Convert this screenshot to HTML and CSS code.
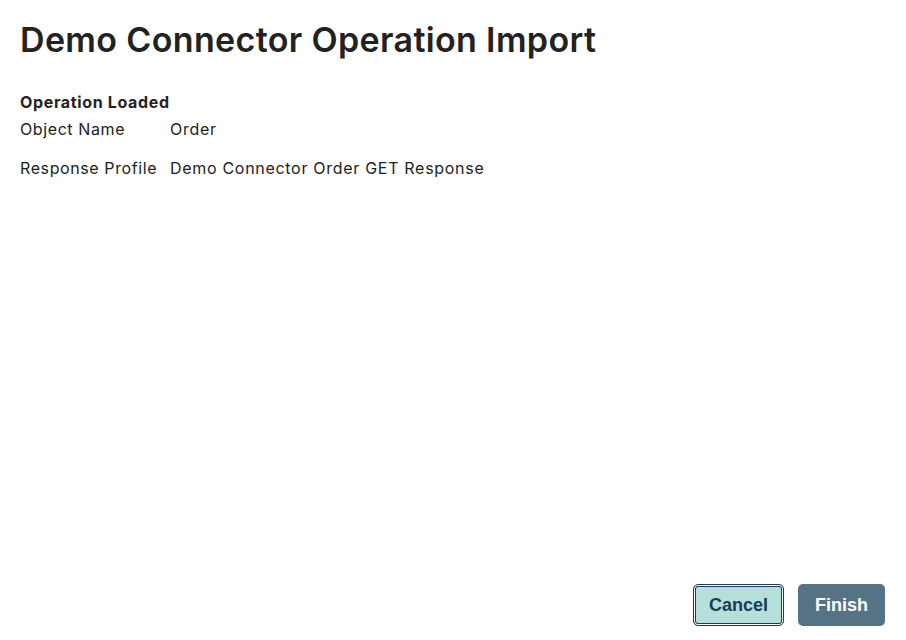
FILE: index.html
```html
<!DOCTYPE html>
<html>
<head>
<meta charset="utf-8">
<link rel="stylesheet" href="styles.css">
</head>
<body>
<div class="page">
  <main class="content">
    <h1 class="title">Demo Connector Operation Import</h1>
    <section class="details">
      <h2 class="section-title">Operation Loaded</h2>
      <div class="row row-first">
        <span class="label">Object Name</span>
        <span class="value">Order</span>
      </div>
      <div class="row">
        <span class="label">Response Profile</span>
        <span class="value">Demo Connector Order GET Response</span>
      </div>
    </section>
  </main>
  <footer class="actions">
    <button class="btn btn-cancel">Cancel</button>
    <button class="btn btn-finish">Finish</button>
  </footer>
</div>
</body>
</html>
```

FILE: styles.css
```css
html, body {
  margin: 0;
  padding: 0;
  background: #ffffff;
}
body {
  font-family: Inter, "Noto Sans", sans-serif;
  color: #222222;
}
.page {
  width: 906px;
  height: 640px;
  display: flex;
  flex-direction: column;
  box-sizing: border-box;
  padding: 20px 21px 14px 20px;
}
.content {
  flex: 1;
}
.title {
  margin: 0;
  font-size: 34px;
  font-weight: 600;
  line-height: 40px;
  letter-spacing: 0.35px;
  color: #222222;
}
.details {
  margin-top: 30px;
  letter-spacing: 0.6px;
}
.section-title {
  margin: 0;
  font-size: 16px;
  font-weight: 700;
  line-height: 24px;
  letter-spacing: 0.65px;
}
.row {
  display: flex;
  font-size: 16px;
  line-height: 24px;
  margin-top: 15px;
}
.row-first {
  margin-top: 3px;
}
.label {
  width: 150px;
}
.value {
  letter-spacing: 0.7px;
}
.actions {
  display: flex;
  justify-content: flex-end;
  gap: 14px;
}
.btn {
  font-family: "Liberation Sans", Arial, sans-serif;
  font-weight: 700;
  font-size: 18px;
  height: 42px;
  border-radius: 5px;
  cursor: pointer;
}
.btn-cancel {
  width: 91px;
  background: #b4dfdb;
  color: #1c3b55;
  border: 1px solid #1c3b55;
  box-shadow: inset 0 0 0 1px #ffffff, inset 0 0 0 2px #1c3b55;
}
.btn-finish {
  width: 87px;
  background: #567385;
  color: #ffffff;
  border: none;
}
```
